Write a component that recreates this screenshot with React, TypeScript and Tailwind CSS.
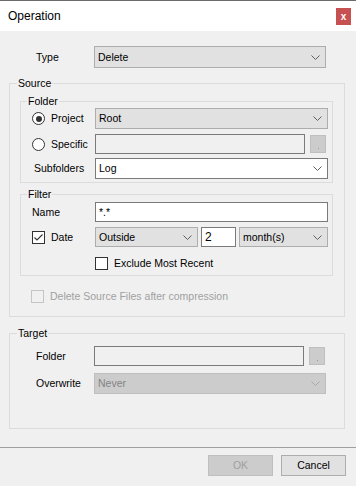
import React from "react";

const font = { fontFamily: '"Liberation Sans", Arial, sans-serif' };

function Chevron({ color = "#606060" }: { color?: string }) {
    return (
        <svg width="9" height="5" viewBox="0 0 9 5" className="shrink-0">
            <polyline points="0.5,0.5 4.5,4.5 8.5,0.5" fill="none" stroke={color} strokeWidth="1" />
        </svg>
    );
}

function Select({ value, className = "", variant = "gray" }: { value: string; className?: string; variant?: "gray" | "white" | "disabled" }) {
    const look =
        variant === "white"
            ? "bg-white border-[#7a7a7a] text-black"
            : variant === "disabled"
            ? "bg-[#cccccc] border-[#bfbfbf] text-[#838383]"
            : "bg-[#e1e1e1] border-[#adadad] text-black";
    return (
        <div className={`${look} border flex items-center justify-between pl-[3px] pr-[5px] ${className}`}>
            <span>{value}</span>
            <Chevron color={variant === "disabled" ? "#a8a8a8" : "#606060"} />
        </div>
    );
}

function Radio({ checked }: { checked?: boolean }) {
    return (
        <span className="w-[13px] h-[13px] rounded-full border border-[#333333] bg-white flex items-center justify-center shrink-0">
            {checked && <span className="w-[6px] h-[6px] rounded-full bg-[#333333]"></span>}
        </span>
    );
}

function Check({ checked, disabled }: { checked?: boolean; disabled?: boolean }) {
    return (
        <span className={`w-[13px] h-[13px] border ${disabled ? "border-[#c5c5c5] bg-[#f0f0f0]" : "border-[#333333] bg-white"} flex items-center justify-center shrink-0`}>
            {checked && (
                <svg width="11" height="11" viewBox="0 0 11 11">
                    <polyline points="1.5,5.5 4,8 9.5,2.5" fill="none" stroke="#333333" strokeWidth="1.1" />
                </svg>
            )}
        </span>
    );
}

function Browse() {
    return (
        <div className="w-[16px] h-[18px] bg-[#cccccc] border border-[#bfbfbf] flex items-end justify-center pb-[3px] shrink-0">
            <span className="w-[1px] h-[1px] bg-[#9a9a9a]"></span>
        </div>
    );
}

export default function App() {
    return (
        <div className="w-[356px] h-[486px] bg-[#f0f0f0] flex flex-col text-[10.5px] leading-[13px] text-black overflow-hidden" style={font}>
            {/* title bar */}
            <div className="h-[31px] bg-white border-t border-[#6b6b6b] flex items-start justify-between shrink-0">
                <span className="ml-[8px] mt-[8px] text-[12px] leading-[14px]">Operation</span>
                <div className="mt-[7px] mr-[5px] w-[15px] h-[17px] bg-[#c75050] text-white font-bold text-[10px] flex items-center justify-center">x</div>
            </div>

            {/* type */}
            <div className="flex items-center mt-[15px] h-[22px]">
                <span className="ml-[36px] w-[58px]">Type</span>
                <Select value="Delete" className="w-[232px] h-[22px]" />
            </div>

            {/* source */}
            <fieldset className="ml-[9px] w-[336px] mt-[9px] border border-[#dcdcdc] p-0 pb-[13px]">
                <legend className="ml-[7px] px-[1px] leading-[13px]">Source</legend>

                <fieldset className="ml-[10px] w-[313px] mt-[5px] border border-[#dcdcdc] p-0 pb-[3px]">
                    <legend className="ml-[6px] px-[1px] leading-[13px]">Folder</legend>
                    <div className="flex items-center h-[21px]">
                        <div className="w-[74px] flex items-center gap-[6px] pl-[11px]">
                            <Radio checked />
                            <span>Project</span>
                        </div>
                        <Select value="Root" className="w-[233px] h-[21px]" />
                    </div>
                    <div className="flex items-center h-[20px] mt-[5px]">
                        <div className="w-[74px] flex items-center gap-[6px] pl-[11px]">
                            <Radio />
                            <span>Specific</span>
                        </div>
                        <div className="w-[210px] h-[20px] border border-[#7a7a7a] bg-[#f0f0f0]"></div>
                        <div className="ml-[5px]">
                            <Browse />
                        </div>
                    </div>
                    <div className="flex items-center h-[21px] mt-[4px]">
                        <span className="w-[74px] pl-[13px]">Subfolders</span>
                        <Select value="Log" variant="white" className="w-[233px] h-[21px]" />
                    </div>
                </fieldset>

                <fieldset className="ml-[10px] w-[313px] mt-[5px] border border-[#dcdcdc] p-0 pb-[5px]">
                    <legend className="ml-[6px] px-[1px] leading-[13px]">Filter</legend>
                    <div className="flex items-center h-[20px] mt-[1px]">
                        <span className="w-[74px] pl-[11px]">Name</span>
                        <div className="w-[233px] h-[20px] border border-[#7a7a7a] bg-white pl-[3px] flex items-center">*.*</div>
                    </div>
                    <div className="flex items-center h-[20px] mt-[5px]">
                        <div className="w-[74px] flex items-center gap-[6px] pl-[11px]">
                            <Check checked />
                            <span>Date</span>
                        </div>
                        <Select value="Outside" className="w-[103px] h-[20px]" />
                        <div className="ml-[3px] w-[35px] h-[20px] border border-[#7a7a7a] bg-white pl-[3px] flex items-center text-[12px]">2</div>
                        <Select value="month(s)" className="ml-[3px] w-[89px] h-[20px]" />
                    </div>
                    <div className="flex items-center h-[13px] mt-[10px] pl-[74px] gap-[6px]">
                        <Check />
                        <span>Exclude Most Recent</span>
                    </div>
                </fieldset>

                <div className="flex items-center h-[13px] mt-[14px] ml-[21px] gap-[6px] text-[#a0a0a0]">
                    <Check disabled />
                    <span>Delete Source Files after compression</span>
                </div>
            </fieldset>

            {/* target */}
            <fieldset className="ml-[9px] w-[336px] mt-[10px] border border-[#dcdcdc] p-0 pb-[34px]">
                <legend className="ml-[7px] px-[1px] leading-[13px]">Target</legend>
                <div className="flex items-center h-[20px] mt-[6px]">
                    <span className="w-[84px] pl-[26px]">Folder</span>
                    <div className="w-[210px] h-[20px] border border-[#7a7a7a] bg-[#f0f0f0]"></div>
                    <div className="ml-[5px]">
                        <Browse />
                    </div>
                </div>
                <div className="flex items-center h-[21px] mt-[7px]">
                    <span className="w-[84px] pl-[26px]">Overwrite</span>
                    <Select value="Never" variant="disabled" className="w-[232px] h-[21px]" />
                </div>
            </fieldset>

            {/* footer */}
            <div className="mt-[18px] border-t border-[#a0a0a0]"></div>
            <div className="flex justify-end gap-[8px] mt-[7px] mr-[10px]">
                <div className="w-[65px] h-[21px] bg-[#cccccc] border border-[#bfbfbf] text-[#a0a0a0] flex items-center justify-center">OK</div>
                <div className="w-[65px] h-[21px] bg-[#e1e1e1] border border-[#adadad] flex items-center justify-center">Cancel</div>
            </div>
        </div>
    );
}
